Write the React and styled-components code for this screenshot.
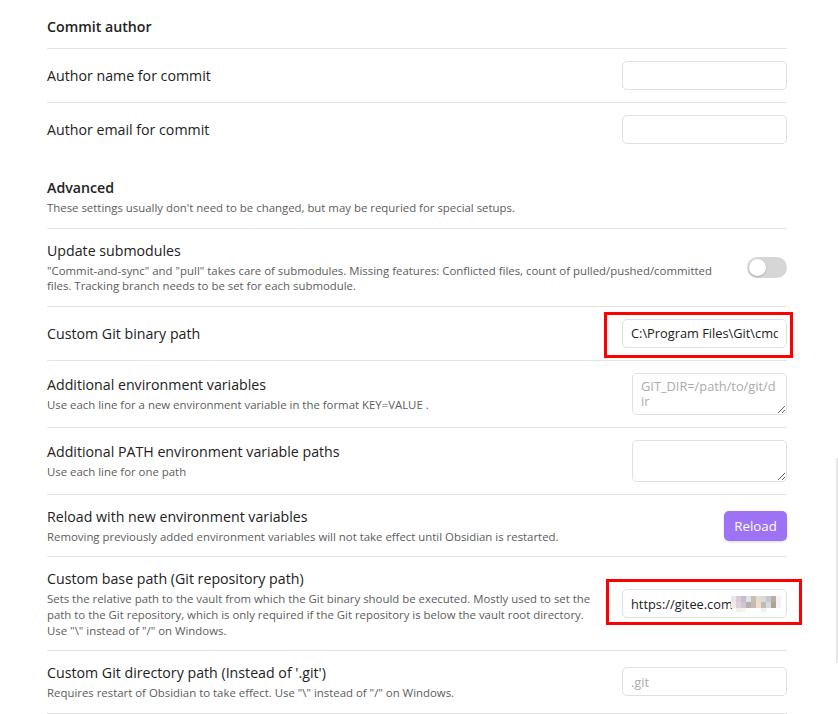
import React from "react"
import styled, { createGlobalStyle } from "styled-components"

const GlobalStyle = createGlobalStyle`
  body {
    margin: 0;
    background: #fff;
    font-family: "Open Sans", "Noto Sans", sans-serif;
    color: #222;
  }
`

const Page = styled.div`
  width: 740px;
  padding: 0 51px 0 47px;
`

const Item = styled.div`
  display: flex;
  align-items: center;
  padding: ${p => (p.$heading ? (p.$first ? "17px 0 12px" : "22px 0 12px") : "12px 0")};
  border-bottom: ${p => (p.$last ? "none" : "1px solid #e3e3e3")};
`

const Info = styled.div`
  flex: 1 1 auto;
  min-width: 0;
  margin-right: 16px;
`

const Name = styled.div`
  font-size: 14.2px;
  line-height: 19px;
  font-weight: ${p => (p.$heading ? 600 : 400)};
  color: #222;
`

const Description = styled.div`
  margin-top: 3px;
  font-size: 11.4px;
  line-height: 15.6px;
  color: #5c5c5c;
`

const Control = styled.div`
  flex: 0 0 auto;
  position: relative;
  display: flex;
  align-items: center;
`

const TextInput = styled.input`
  box-sizing: border-box;
  width: 165px;
  height: 29px;
  padding: 0 8px;
  border: 1px solid #e0e0e0;
  border-radius: 5px;
  background: #fff;
  font-family: "Open Sans", "Noto Sans", sans-serif;
  font-size: 12.8px;
  color: #222;
  outline: none;
  &::placeholder {
    color: #ababab;
  }
`

const TextArea = styled.textarea`
  box-sizing: border-box;
  width: 155px;
  height: 42px;
  padding: 5px 8px;
  border: 1px solid #e0e0e0;
  border-radius: 5px;
  background: #fff;
  font-family: "Open Sans", "Noto Sans", sans-serif;
  font-size: 12.8px;
  line-height: 15px;
  word-break: break-all;
  color: #222;
  outline: none;
  display: block;
  &::placeholder {
    color: #ababab;
  }
`

const Toggle = styled.div`
  width: 40px;
  height: 21px;
  border-radius: 11px;
  background: #d6d6d6;
  position: relative;
  &::after {
    content: "";
    position: absolute;
    top: 2px;
    left: 2px;
    width: 17px;
    height: 17px;
    border-radius: 50%;
    background: #fff;
    box-shadow: 0 1px 2px rgba(0, 0, 0, 0.2);
  }
`

const Button = styled.button`
  height: 30px;
  width: 63px;
  padding: 0;
  border: none;
  border-radius: 5px;
  background: #9d72f4;
  color: #fff;
  font-family: "Open Sans", "Noto Sans", sans-serif;
  font-size: 13.3px;
  box-shadow: 0 1px 3px rgba(0, 0, 0, 0.15);
`

const Highlight = styled.div`
  position: absolute;
  top: ${p => p.$t}px;
  right: ${p => p.$r}px;
  bottom: ${p => p.$b}px;
  left: ${p => p.$l}px;
  border: 3px solid #ff0000;
  pointer-events: none;
`

const Mosaic = styled.svg`
  position: absolute;
  left: 109px;
  top: 7px;
`

const ScrollThumb = styled.div`
  position: fixed;
  left: 836px;
  top: 458px;
  width: 2px;
  height: 205px;
  background: #e6e6e6;
`

function Setting ({ name, desc, heading, first, last, children }) {
  return (
    <Item $heading={heading} $first={first} $last={last}>
      <Info>
        <Name $heading={heading}>{name}</Name>
        {desc && <Description>{desc}</Description>}
      </Info>
      {children && <Control>{children}</Control>}
    </Item>
  )
}

const mosaicCells = [
  [0, 0, "#e9e4ea"], [5, 0, "#d8cdd6"], [10, 0, "#c9bcc8"], [15, 0, "#dfe2e8"], [20, 0, "#c7bdb5"],
  [25, 0, "#e8dccd"], [30, 0, "#d7dbe0"], [35, 0, "#cbc4c9"], [40, 0, "#b8aea6"], [45, 0, "#f2f2f2"],
  [0, 6, "#f0ebf0"], [5, 6, "#ddd3dc"], [10, 6, "#cfc6d0"], [15, 6, "#b8aeb0"], [20, 6, "#c6bbb1"],
  [25, 6, "#efdfc9"], [30, 6, "#c2bab4"], [35, 6, "#d6dadd"], [40, 6, "#ada198"], [45, 6, "#f4f4f4"],
  [5, 12, "#f5efe8"], [10, 12, "#f7f4f0"], [30, 12, "#f1eeee"]
]

export default function App () {
  return (
    <Page>
      <GlobalStyle />
      <Setting heading first name="Commit author" />
      <Setting name="Author name for commit">
        <TextInput />
      </Setting>
      <Setting last name="Author email for commit">
        <TextInput />
      </Setting>

      <Setting heading name="Advanced"
        desc="These settings usually don't need to be changed, but may be requried for special setups." />
      <Setting name="Update submodules"
        desc={"\"Commit-and-sync\" and \"pull\" takes care of submodules. Missing features: Conflicted files, count of pulled/pushed/committed files. Tracking branch needs to be set for each submodule."}>
        <Toggle />
      </Setting>
      <Setting name="Custom Git binary path">
        <TextInput defaultValue={"C:\\Program Files\\Git\\cmd\\git.exe"} />
        <Highlight $t={-7} $r={-6} $b={-10} $l={-18} />
      </Setting>
      <Setting name="Additional environment variables"
        desc="Use each line for a new environment variable in the format KEY=VALUE .">
        <TextArea placeholder="GIT_DIR=/path/to/git/dir" />
      </Setting>
      <Setting name="Additional PATH environment variable paths"
        desc="Use each line for one path">
        <TextArea />
      </Setting>
      <Setting name="Reload with new environment variables"
        desc="Removing previously added environment variables will not take effect until Obsidian is restarted.">
        <Button>Reload</Button>
      </Setting>
      <Setting name="Custom base path (Git repository path)"
        desc={"Sets the relative path to the vault from which the Git binary should be executed. Mostly used to set the path to the Git repository, which is only required if the Git repository is below the vault root directory. Use \"\\\" instead of \"/\" on Windows."}>
        <TextInput defaultValue="https://gitee.com" />
        <Mosaic width="50" height="16" viewBox="0 0 50 16">
          {mosaicCells.map(([x, y, c], i) => (
            <rect key={i} x={x} y={y} width="5" height="6" fill={c} />
          ))}
        </Mosaic>
        <Highlight $t={-10} $r={-15} $b={-7} $l={-16} />
      </Setting>
      <Setting name="Custom Git directory path (Instead of '.git')"
        desc={"Requires restart of Obsidian to take effect. Use \"\\\" instead of \"/\" on Windows."}>
        <TextInput placeholder=".git" />
      </Setting>
      <ScrollThumb />
    </Page>
  )
}
